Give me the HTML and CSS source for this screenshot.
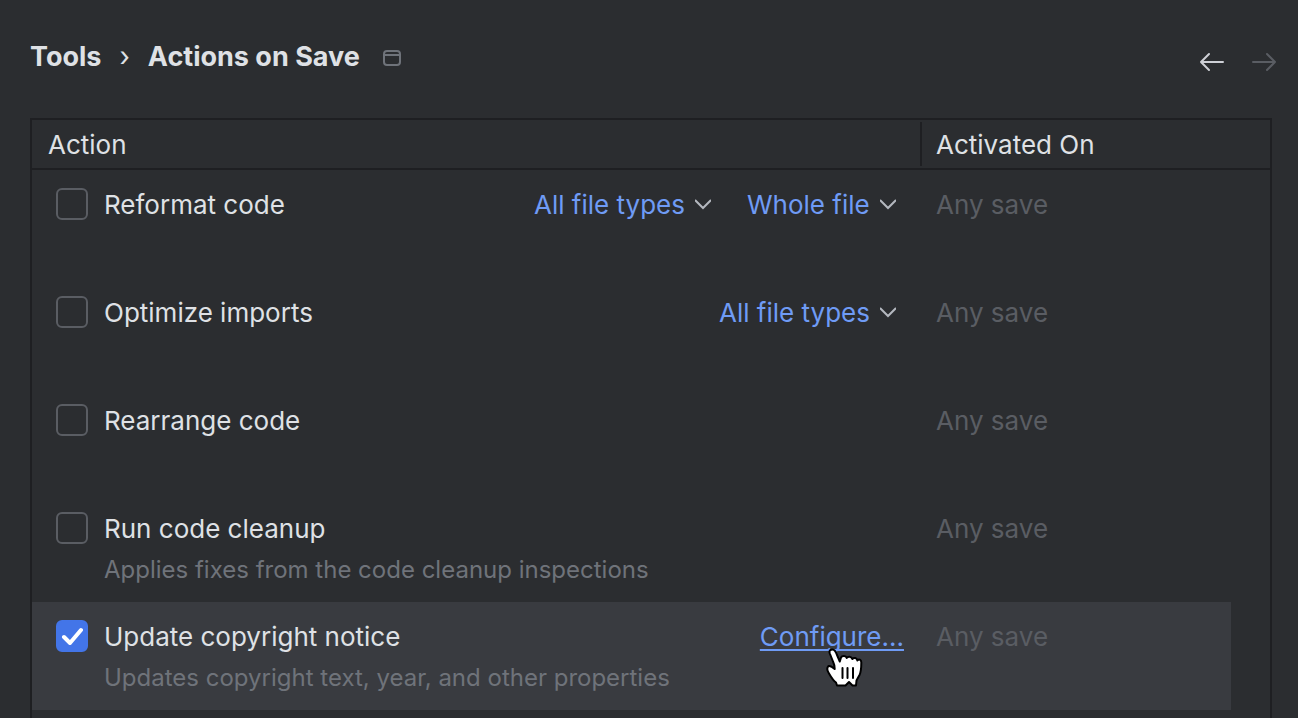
FILE: index.html
```html
<!DOCTYPE html>
<html lang="en">

<head>
    <meta charset="UTF-8">
    <meta name="viewport" content="width=device-width, initial-scale=1.0">
    <title>Actions on Save</title>
    <link rel="stylesheet" href="styles.css">
</head>

<body>

    <header class="header">
        <h1 class="breadcrumb">
            <a href="#tools">Tools</a>
            <span class="separator">›</span>
            <span>Actions on Save</span>
        </h1>
        <svg class="project-icon" width="20" height="18" viewBox="0 0 20 18" fill="none" stroke="#6f737a" stroke-width="2">
            <rect x="2" y="2" width="16" height="14" rx="3" />
            <path d="M2 6h16" />
        </svg>
        <nav class="history">
            <button type="button" class="nav-btn" aria-label="Back">
                <svg width="28" height="20" viewBox="0 0 28 20" fill="none" stroke="currentColor" stroke-width="2" stroke-linecap="round" stroke-linejoin="round">
                    <path d="M25 10H3M11 2L3 10l8 8" />
                </svg>
            </button>
            <button type="button" class="nav-btn" aria-label="Forward" disabled>
                <svg width="28" height="20" viewBox="0 0 28 20" fill="none" stroke="currentColor" stroke-width="2" stroke-linecap="round" stroke-linejoin="round">
                    <path d="M3 10h22M17 2l8 8-8 8" />
                </svg>
            </button>
        </nav>
    </header>

    <main class="frame">
        <table class="actions">
            <colgroup>
                <col>
                <col class="col-activated">
                <col class="col-gutter">
            </colgroup>
            <thead>
                <tr>
                    <th>Action</th>
                    <th colspan="2"><div class="divided">Activated On</div></th>
                </tr>
            </thead>
            <tbody>
                <tr>
                    <td>
                        <div class="action">
                            <input type="checkbox" class="check" id="reformat">
                            <label for="reformat">Reformat code</label>
                            <div class="options">
                                <span class="dropdown">
                                    <select aria-label="Reformat file types">
                                        <option>All file types</option>
                                    </select>
                                    <svg class="chevron" width="16" height="12" viewBox="0 0 16 12"><path d="M0 1l8 8 8-8" /></svg>
                                </span>
                                <span class="dropdown">
                                    <select aria-label="Reformat scope">
                                        <option>Whole file</option>
                                    </select>
                                    <svg class="chevron" width="16" height="12" viewBox="0 0 16 12"><path d="M0 1l8 8 8-8" /></svg>
                                </span>
                            </div>
                        </div>
                    </td>
                    <td class="activated">Any save</td>
                    <td class="gutter"></td>
                </tr>
                <tr>
                    <td>
                        <div class="action">
                            <input type="checkbox" class="check" id="optimize">
                            <label for="optimize">Optimize imports</label>
                            <div class="options">
                                <span class="dropdown">
                                    <select aria-label="Optimize imports file types">
                                        <option>All file types</option>
                                    </select>
                                    <svg class="chevron" width="16" height="12" viewBox="0 0 16 12"><path d="M0 1l8 8 8-8" /></svg>
                                </span>
                            </div>
                        </div>
                    </td>
                    <td class="activated">Any save</td>
                    <td class="gutter"></td>
                </tr>
                <tr>
                    <td>
                        <div class="action">
                            <input type="checkbox" class="check" id="rearrange">
                            <label for="rearrange">Rearrange code</label>
                        </div>
                    </td>
                    <td class="activated">Any save</td>
                    <td class="gutter"></td>
                </tr>
                <tr>
                    <td>
                        <div class="action">
                            <input type="checkbox" class="check" id="cleanup">
                            <label for="cleanup">Run code cleanup</label>
                        </div>
                        <p class="hint">Applies fixes from the code cleanup inspections</p>
                    </td>
                    <td class="activated">Any save</td>
                    <td class="gutter"></td>
                </tr>
                <tr class="selected">
                    <td>
                        <div class="action">
                            <input type="checkbox" class="check" id="copyright" checked>
                            <label for="copyright">Update copyright notice</label>
                            <div class="options">
                                <a href="#configure" class="configure">Configure...
                                    <svg class="pointer" width="40" height="44" viewBox="0 0 40 44" stroke="#000" stroke-width="2" stroke-linejoin="round" stroke-linecap="round">
                                        <path fill="#fff" d="M4.8 7.5C3.8 4.8 5.4 3.5 7.5 3.5C9.6 3.5 10.8 5.5 12 9L14.8 15.5L16 11.5C17 9.5 21 9.5 21.7 12C23 10 26.5 10.5 27.3 13C29 11 32 12 32.3 14.5C34.5 12.5 36.5 14 36.3 17C36.3 22 36 26 34.5 29L31.5 34.5L31 39.5H27.5L24 36L20.5 39.5H12L11 36.5C8 34.5 6 31 4 27.5C2 24.5 2 21.5 3.5 20C5.5 19.5 7.5 21 9.7 23C9.7 20 9 17.5 8 15.5Z" />
                                        <path fill="none" d="M17.5 22v10M22.5 22v10M28 22v10" />
                                    </svg>
                                </a>
                            </div>
                        </div>
                        <p class="hint">Updates copyright text, year, and other properties</p>
                    </td>
                    <td class="activated">Any save</td>
                    <td class="gutter"></td>
                </tr>
            </tbody>
        </table>
    </main>

</body>

</html>
```

FILE: styles.css
```css
* {
    box-sizing: border-box;
}

body {
    display: flex;
    flex-direction: column;
    height: 100vh;
    margin: 0;
    padding: 38px 26px 0 30px;
    overflow: hidden;
    background-color: #2b2d30;
    color: #dfe1e5;
    font-family: Inter, sans-serif;
    font-size: 26px;
    line-height: 36px;
}

.header {
    display: flex;
    align-items: center;
    height: 80px;
    padding-bottom: 40px;
}

.breadcrumb {
    display: flex;
    gap: 18px;
    margin: 0;
    padding-bottom: 2px;
    font-size: 27px;
    font-weight: bold;
}

.breadcrumb a {
    color: inherit;
    text-decoration: none;
}

.separator {
    font-weight: normal;
}

.project-icon {
    margin-left: 22px;
}

.history {
    display: flex;
    gap: 24px;
    margin-left: auto;
    margin-right: -6px;
    padding-top: 8px;
}

.nav-btn {
    display: flex;
    padding: 0;
    border: none;
    background: none;
    color: #ced0d6;
    cursor: pointer;
}

.nav-btn:disabled {
    color: #5a5d63;
    cursor: default;
}

.frame {
    flex: 1;
    border: 2px solid #1e1f22;
    border-bottom: none;
}

.actions {
    width: 100%;
    table-layout: fixed;
    border-collapse: separate;
    border-spacing: 0;
}

.col-activated {
    width: 311px;
}

.col-gutter {
    width: 39px;
}

th {
    height: 50px;
    padding: 2px 0 0 16px;
    border-bottom: 2px solid #1e1f22;
    font-weight: normal;
    text-align: left;
}

th[colspan] {
    padding: 2px 0;
}

.divided {
    height: 44px;
    padding-left: 14px;
    border-left: 2px solid #1e1f22;
    line-height: 46px;
}

td {
    height: 108px;
    padding: 17px 0 0;
    vertical-align: top;
}

.action {
    display: flex;
    align-items: flex-start;
    gap: 16px;
    padding: 0 16px 0 24px;
}

.check {
    appearance: none;
    display: grid;
    place-items: center;
    width: 32px;
    height: 32px;
    margin: 1px 0 0;
    border: 2px solid #5a5d63;
    border-radius: 6px;
}

.check:checked {
    border-color: #4375e8;
    background-color: #4375e8;
}

.check:checked::before {
    content: "";
    width: 22px;
    height: 18px;
    background-image: url("data:image/svg+xml,%3Csvg xmlns='http://www.w3.org/2000/svg' viewBox='0 0 22 18'%3E%3Cpath d='M3 10l6 6L20 3' fill='none' stroke='white' stroke-width='4' stroke-linecap='round' stroke-linejoin='round'/%3E%3C/svg%3E");
}

.options {
    display: flex;
    gap: 28px;
    margin-left: auto;
}

.dropdown {
    display: grid;
    align-items: center;
}

.dropdown select {
    grid-area: 1 / 1;
    appearance: none;
    height: 36px;
    padding: 0 34px 0 0;
    border: none;
    background: none;
    color: #6f9bf5;
    font: inherit;
    cursor: pointer;
}

.chevron {
    grid-area: 1 / 1;
    justify-self: end;
    margin-right: 8px;
    fill: none;
    stroke: #b4b8bf;
    stroke-width: 2;
    pointer-events: none;
}

.configure {
    position: relative;
    color: #6f9bf5;
    text-decoration-thickness: 2px;
    text-underline-offset: 3px;
    text-decoration-skip-ink: none;
}

/* hand cursor resting on the link */
.pointer {
    position: absolute;
    top: 27px;
    left: 65px;
    pointer-events: none;
}

.hint {
    margin: 7px 0 0 72px;
    color: #6f737a;
    font-size: 24px;
    line-height: 32px;
}

.activated {
    padding-left: 16px;
    color: #5a5d63;
}

.selected td {
    background-color: #393b40;
}

.selected .gutter {
    background: none;
}
```
